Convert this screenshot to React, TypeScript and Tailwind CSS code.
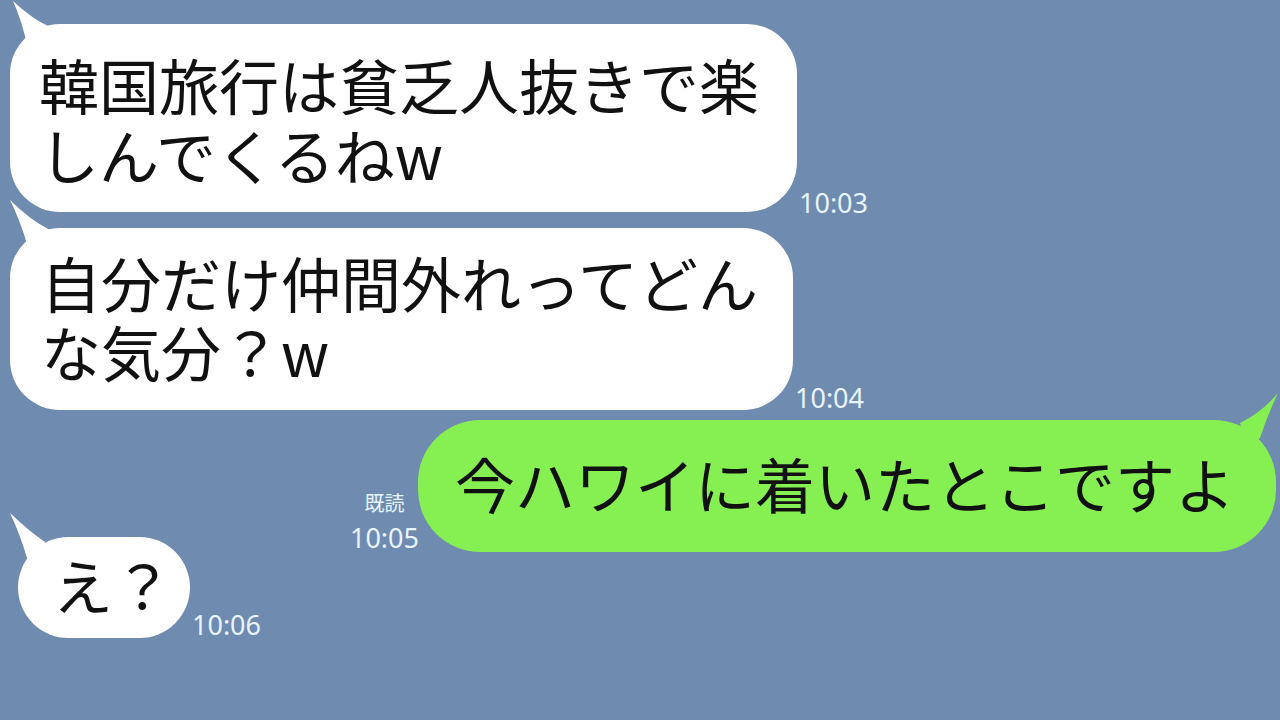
import React from "react";

const jp = { fontFamily: '"Noto Sans CJK JP", "Noto Sans", sans-serif' };
const ts = { fontFamily: '"Noto Sans", "Noto Sans CJK JP", sans-serif' };

function Tail({ className, d, fill, w = 60, h = 50 }: { className: string; d: string; fill: string; w?: number; h?: number }) {
  return (
    <svg className={className} width={w} height={h} viewBox={`0 0 ${w} ${h}`}>
      <path d={d} fill={fill} />
    </svg>
  );
}

export default function App() {
  return (
    <div className="w-[1280px] h-[720px] bg-[#6f8bb0] overflow-hidden flex flex-col pt-[24px]" style={jp}>
      {/* Row 1 */}
      <div className="flex items-end pl-[10px] gap-[2px]">
        <div className="relative w-[787px] bg-white rounded-[50px] pl-[29px] pt-[25px] pb-[23px] text-[60px] leading-[70px] text-[#111] whitespace-nowrap">
          <Tail className="absolute left-[-10px] top-[-25px]" fill="#ffffff" d="M13 2 Q32 20 50 28 L40 46 L27 46 Q22 22 13 2 Z" />
          <span className="relative">韓国旅行は貧乏人抜きで楽<br />しんでくるねw</span>
        </div>
        <div className="text-[27px] leading-[27px] text-[#e8f4ff] mb-[-4px]" style={ts}>10:03</div>
      </div>

      {/* Row 2 */}
      <div className="flex items-end pl-[10px] gap-[2px] mt-[16px]">
        <div className="relative w-[783px] bg-white rounded-[50px] pl-[31px] pt-[19px] pb-[25px] text-[60px] leading-[69px] text-[#111] whitespace-nowrap">
          <Tail className="absolute left-[-10px] top-[-30px]" fill="#ffffff" d="M10 2 Q30 22 50 32 L40 48 L27 46 Q20 22 10 2 Z" />
          <span className="relative">自分だけ仲間外れってどん<br />な気分？w</span>
        </div>
        <div className="text-[27px] leading-[27px] text-[#e8f4ff] mb-[-1px]" style={ts}>10:04</div>
      </div>

      {/* Row 3 */}
      <div className="flex items-end justify-end pr-[4px] mt-[10px]">
        <div className="flex flex-col items-center mb-[1px] mr-[-1px]">
          <div className="text-[20px] leading-[20px] text-[#e8f4ff] mb-[11px]">既読</div>
          <div className="text-[27px] leading-[27px] text-[#e8f4ff]" style={ts}>10:05</div>
        </div>
        <div className="relative w-[858px] bg-[#86ef52] rounded-[62px] pl-[37px] pt-[28px] pb-[34px] text-[60px] leading-[70px] text-[#111] whitespace-nowrap">
          <Tail className="absolute right-[-10px] top-[-30px]" w={60} h={60} fill="#86ef52" d="M52 3 Q36 22 14 33 L20 56 L34 48 Q42 24 52 3 Z" />
          <span className="relative">今ハワイに着いたとこですよ</span>
        </div>
      </div>

      {/* Row 4 */}
      <div className="flex items-end pl-[18px] gap-[2px] mt-[-15px]">
        <div className="relative w-[172px] bg-white rounded-full pl-[35px] pt-[12px] pb-[19px] text-[60px] leading-[70px] text-[#111] whitespace-nowrap">
          <Tail className="absolute left-[-10px] top-[-25px]" fill="#ffffff" d="M2 1 Q22 20 37 30 L30 46 L19 46 Q12 22 2 1 Z" />
          <span className="relative">え？</span>
        </div>
        <div className="text-[27px] leading-[27px] text-[#e8f4ff]" style={ts}>10:06</div>
      </div>
    </div>
  );
}
